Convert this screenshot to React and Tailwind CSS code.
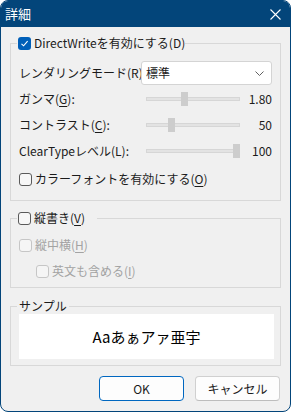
import React from 'react';

const font = { fontFamily: '"Noto Sans CJK JP", "Noto Sans", sans-serif' };

const U = ({ children }) => <span className="underline underline-offset-2">{children}</span>;

const CheckBox = ({ checked, disabled }) => {
    if (checked) {
        return (
            <span className="w-[13px] h-[13px] rounded-[3px] bg-[#005fb8] flex items-center justify-center shrink-0">
                <svg width="9" height="9" viewBox="0 0 9 9">
                    <path d="M1.5 4.8 L3.6 6.8 L7.6 2.2" fill="none" stroke="white" strokeWidth="1.1" />
                </svg>
            </span>
        );
    }
    return (
        <span className={`w-[13px] h-[13px] rounded-[3px] border shrink-0 ${disabled ? 'border-[#c6c6c6] bg-[#f5f5f5]' : 'border-[#5a5a5a] bg-[#f7f7f7]'}`} />
    );
};

const Slider = ({ thumb }) => (
    <div className="relative w-[94px] h-[14px] flex items-center">
        <div className="w-full h-[4px] bg-[#e3e3e3] border border-[#d6d6d6]" />
        <div className={`absolute top-0 w-[7px] h-[14px] bg-[#cdcdcd] ${thumb}`} />
    </div>
);

const SliderRow = ({ label, thumb, value }) => (
    <div className="h-[26px] flex items-center">
        <div className="w-[127px] whitespace-nowrap">{label}</div>
        <Slider thumb={thumb} />
        <div className="w-[32px] text-right">{value}</div>
    </div>
);

const App = () => {
    return (
        <div className="w-[291px] h-[412px] bg-white" style={font}>
            <div className="w-[291px] h-[412px] rounded-[8px] border border-[#03457a] bg-[#f0f0f0] overflow-hidden flex flex-col text-[12px] leading-[14px] text-[#1b1b1b]">
                {/* Title bar */}
                <div className="h-[26px] bg-[#03457a] flex items-center justify-between pl-[4px] pr-[9px] shrink-0">
                    <span className="text-white text-[13px]">詳細</span>
                    <svg width="11" height="11" viewBox="0 0 11 11">
                        <path d="M0.5 0.5 L10.5 10.5 M10.5 0.5 L0.5 10.5" stroke="white" strokeWidth="1.1" />
                    </svg>
                </div>

                {/* DirectWrite group */}
                <div className="relative ml-[9px] mt-[16px] w-[271px] border border-[#d8d8d8] pl-[8px] pr-[6px] pt-[17px] pb-[8px]">
                    <div className="absolute left-[6px] top-[-8px] w-[168px] h-[14px] bg-[#f0f0f0] flex items-center gap-[3px] pl-[1px] overflow-hidden whitespace-nowrap">
                        <CheckBox checked />
                        <span>DirectWriteを有効にする(<U>D</U>)</span>
                    </div>

                    <div className="h-[24px] flex items-center">
                        <div className="w-[122px] whitespace-nowrap overflow-hidden">レンダリングモード(<U>R</U>)</div>
                        <div className="w-[131px] h-[24px] bg-white border border-[#d4d4d4] rounded-[3px] flex items-center justify-between pl-[4px] pr-[7px]">
                            <span>標準</span>
                            <svg width="9" height="5" viewBox="0 0 9 5">
                                <path d="M0.5 0.5 L4.5 4.5 L8.5 0.5" fill="none" stroke="#606060" strokeWidth="1" />
                            </svg>
                        </div>
                    </div>

                    <div className="mt-[1px]">
                        <SliderRow label={<>ガンマ(<U>G</U>):</>} thumb="left-[35px]" value="1.80" />
                        <SliderRow label={<>コントラスト(<U>C</U>):</>} thumb="left-[22px]" value="50" />
                        <SliderRow label="ClearTypeレベル(L):" thumb="left-[87px]" value="100" />
                    </div>

                    <div className="mt-[2px] h-[26px] flex items-center gap-[3px]">
                        <CheckBox />
                        <span>カラーフォントを有効にする(<U>O</U>)</span>
                    </div>
                </div>

                {/* Vertical group */}
                <div className="relative ml-[9px] mt-[17px] w-[271px] border border-[#d8d8d8] pl-[8px] pt-[13px] pb-[3px]">
                    <div className="absolute left-[6px] top-[-8px] w-[80px] h-[14px] bg-[#f0f0f0] flex items-center gap-[3px] pl-[1px] whitespace-nowrap">
                        <CheckBox />
                        <span>縦書き(<U>V</U>)</span>
                    </div>
                    <div className="h-[26px] flex items-center gap-[3px] text-[#a3a3a3]">
                        <CheckBox disabled />
                        <span>縦中横(<U>H</U>)</span>
                    </div>
                    <div className="h-[26px] flex items-center gap-[3px] pl-[17px] text-[#a3a3a3]">
                        <CheckBox disabled />
                        <span>英文も含める(<U>I</U>)</span>
                    </div>
                </div>

                {/* Sample group */}
                <div className="relative ml-[9px] mt-[18px] w-[271px] border border-[#d8d8d8] pl-[8px] pr-[6px] pt-[7px] pb-[6px]">
                    <div className="absolute left-[6px] top-[-8px] h-[14px] bg-[#f0f0f0] px-[2px] flex items-center whitespace-nowrap">
                        サンプル
                    </div>
                    <div className="h-[45px] bg-white flex items-center justify-center text-[15px] text-black">
                        Aaあぁアァ亜宇
                    </div>
                </div>

                {/* Buttons */}
                <div className="mt-[10px] flex justify-end gap-[11px] pr-[10px]">
                    <button className="w-[85px] h-[25px] rounded-[4px] border border-[#0067c0] bg-[#fdfdfd] text-[12px]">OK</button>
                    <button className="w-[85px] h-[25px] rounded-[4px] border border-[#d0d0d0] border-b-[#bdbdbd] bg-[#fdfdfd] text-[12px]">キャンセル</button>
                </div>
            </div>
        </div>
    );
};

export default App;
